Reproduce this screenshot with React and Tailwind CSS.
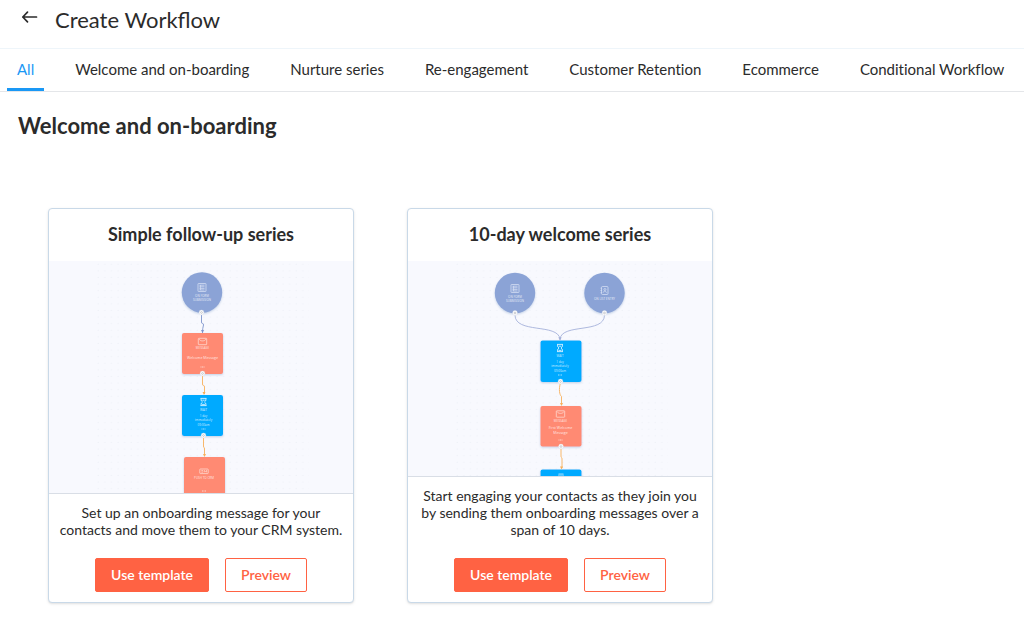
const tabs = [
  "All",
  "Welcome and on-boarding",
  "Nurture series",
  "Re-engagement",
  "Customer Retention",
  "Ecommerce",
  "Conditional Workflow",
];

const BLUE = "#00aaff";
const CORAL = "#ff8a73";
const PERIWINKLE = "#8ba3d6";
const ORANGE = "#f7b05b";

const FormIcon = ({ x, y }) => (
  <g transform={`translate(${x} ${y})`} fill="none" stroke="#d3ddf3" strokeWidth="0.8">
    <rect x="-4" y="-4" width="8" height="8" rx="0.5" />
    <path d="M-2.5 -2.3h5M-2.5 -0.7h5M-2.5 0.9h5M-2.5 2.5h5M-1.6 -2.5v5" />
  </g>
);

const ListIcon = ({ x, y }) => (
  <g transform={`translate(${x} ${y})`} fill="none" stroke="#d3ddf3" strokeWidth="0.8">
    <rect x="-3" y="-4" width="6.5" height="8" rx="1" />
    <path d="M-4 -2.3h1.6M-4 0h1.6M-4 2.3h1.6M-1.3 2.2c0-2 3.2-2 3.2 0" />
    <circle cx="0.4" cy="-1" r="1" />
  </g>
);

const MailIcon = ({ x, y }) => (
  <g transform={`translate(${x} ${y})`} fill="none" stroke="#ffe2db" strokeWidth="0.7">
    <rect x="-4.2" y="-3.2" width="8.4" height="6.4" rx="0.6" />
    <path d="M-3.4 -2.4c1.2 2.4 5.6 2.4 6.8 0" />
  </g>
);

const WaitIcon = ({ x, y }) => (
  <g transform={`translate(${x} ${y})`} fill="none" stroke="#d6f1ff" strokeWidth="0.9">
    <path d="M-3 -3.6h6M-3 3.6h6M-2.4 -3.6v1.6q0 1 1.4 2q-1.4 1 -1.4 2v1.6M2.4 -3.6v1.6q0 1 -1.4 2q1.4 1 1.4 2v1.6M-1.2 -1.8h2.4M-1.4 2.4h2.8" />
  </g>
);

const CrmIcon = ({ x, y }) => (
  <g transform={`translate(${x} ${y})`} fill="none" stroke="#ffe2db" strokeWidth="0.7">
    <rect x="-4.2" y="-2.5" width="8.4" height="4.6" rx="0.6" />
    <path d="M-2.6 -0.9h1.6M-2.6 0.6h1.6M0.2 0.8v-1.8l1.2 1 1.2 -1v1.8" />
  </g>
);

// lines is a list of [baseline, text, size]
const Labels = ({ x, lines }) => (
  <g fill="#ffffff" fillOpacity="0.8" textAnchor="middle" className="font-['Open_Sans',sans-serif]">
    {lines.map(([y, text, size = 3]) => (
      <text key={y} x={x} y={y} fontSize={size}>{text}</text>
    ))}
  </g>
);

const Dots = ({ x, y }) => (
  <path d={`M${x - 2} ${y}h4`} stroke="#ffffff" strokeOpacity="0.8" strokeWidth="0.8" strokeDasharray="1 0.5" />
);

const Port = ({ x, y }) => (
  <g>
    <circle cx={x} cy={y} r="2.4" fill="#ffffff" stroke="#dcdfe6" strokeWidth="0.4" />
    <circle cx={x} cy={y} r="0.9" fill="none" stroke="#9a9fa8" strokeWidth="0.5" />
  </g>
);

const Arrow = ({ d, x, y, color }) => (
  <g>
    <path d={d} fill="none" stroke={color} strokeWidth="0.9" />
    <path d={`M${x - 1.5} ${y - 3}h3l-1.5 3z`} fill={color} />
  </g>
);

const Canvas = ({ id, height, children }) => (
  <svg
    viewBox={`0 0 304 ${height}`}
    preserveAspectRatio="xMidYMin meet"
    className="block w-full"
    role="img"
    aria-labelledby={`${id}-title`}
  >
    <defs>
      <pattern id={`${id}-dots`} width="6.6" height="6.6" patternUnits="userSpaceOnUse">
        <circle cx="3" cy="3" r="0.5" fill="#e6e9f2" />
      </pattern>
      <filter id={`${id}-shadow`} x="-30%" y="-30%" width="160%" height="160%">
        <feDropShadow dx="0" dy="1" stdDeviation="1.3" floodColor="#7f9dc9" floodOpacity="0.45" />
      </filter>
    </defs>
    <rect x="46" width="214" height={height} fill={`url(#${id}-dots)`} />
    {children}
  </svg>
);

const FollowUpDiagram = ({ id }) => (
  <Canvas id={id} height={232}>
    <g filter={`url(#${id}-shadow)`}>
      <circle cx="153" cy="31.5" r="20.2" fill={PERIWINKLE} />
      <rect x="133" y="72" width="41" height="41" rx="2" fill={CORAL} />
      <rect x="133" y="134" width="41" height="41" rx="2" fill={BLUE} />
      <rect x="135" y="196" width="41" height="41" rx="2" fill={CORAL} />
    </g>

    <Arrow d="M152.5 53v8q0 1.5 1 1.5t1 1.5q-1 3 -1 8" x={153.5} y={72} color="#7d94cc" />
    <Arrow d="M153.5 114v9q0 1.5 1 1.5t1 1.5v7" x={155} y={134} color={ORANGE} />
    <Arrow d="M154.5 176v9q0 1.5 0.5 1.5t0.5 1.5v7" x={155.5} y={196} color={ORANGE} />

    <FormIcon x={153} y={26.5} />
    <Labels x={153} lines={[[36, "ON FORM"], [39.5, "SUBMISSION"]]} />

    <MailIcon x={153.5} y={80.5} />
    <Labels x={153.5} lines={[[88, "MESSAGE"], [97.5, "Welcome Message", 3.6]]} />
    <Dots x={153.5} y={106} />

    <WaitIcon x={154.5} y={141} />
    <Labels x={154.5} lines={[[150, "WAIT"], [155.5, "1 day"], [160, "immediately"], [165, "09:00am"]]} />
    <Dots x={154.5} y={168} />

    <CrmIcon x={155} y={210.5} />
    <Labels x={155} lines={[[217.5, "PUSH TO CRM"]]} />
    <Dots x={155} y={230} />

    <Port x={152.5} y={51.5} />
    <Port x={153.5} y={112.5} />
    <Port x={154.5} y={174.5} />
  </Canvas>
);

const WelcomeDiagram = ({ id }) => (
  <Canvas id={id} height={215}>
    <g filter={`url(#${id}-shadow)`}>
      <circle cx="107" cy="32" r="20.2" fill={PERIWINKLE} />
      <circle cx="196.5" cy="32" r="20.2" fill={PERIWINKLE} />
      <rect x="132.5" y="79.5" width="41" height="41.5" rx="2" fill={BLUE} />
      <rect x="132.5" y="145" width="41" height="40.5" rx="2" fill={CORAL} />
      <rect x="132.5" y="208.5" width="41" height="41" rx="2" fill={BLUE} />
    </g>

    <Arrow d="M107 54c0 19 43 8 45 24" x={152} y={79.5} color="#a5b1da" />
    <Arrow d="M196.5 54c0 19 -42.5 8 -44.5 24" x={152} y={79.5} color="#a5b1da" />
    <Arrow d="M152.5 122c-2 6 -1 12 1 13.5v8" x={153.5} y={145} color={ORANGE} />
    <Arrow d="M153 187v8q0 1.5 0.5 1.5t0.5 1.5v9" x={153.5} y={208.5} color={ORANGE} />

    <FormIcon x={107} y={27.5} />
    <Labels x={107} lines={[[36.5, "ON FORM"], [40.5, "SUBMISSION"]]} />
    <ListIcon x={196.5} y={29.5} />
    <Labels x={196.5} lines={[[38.5, "ON LIST ENTRY"]]} />

    <WaitIcon x={152} y={87} />
    <Labels x={152} lines={[[95.5, "WAIT"], [101.5, "1 day"], [106, "immediately"], [111, "09:00am"]]} />
    <Dots x={152} y={114} />

    <MailIcon x={152.5} y={153} />
    <Labels x={152.5} lines={[[160.5, "MESSAGE"], [168, "First Welcome", 3.6], [172.5, "Message", 3.6]]} />
    <Dots x={152.5} y={179} />

    <path d="M150.5 213h5M151 215v-1.5M153 215v-1.5M155 215v-1.5" stroke="#d6f1ff" strokeWidth="0.7" />

    <Port x={107} y={52} />
    <Port x={196.5} y={52} />
    <Port x={152.5} y={120.5} />
    <Port x={153} y={185.5} />
  </Canvas>
);

const templates = [
  {
    id: "follow-up",
    title: "Simple follow-up series",
    description: "Set up an onboarding message for your contacts and move them to your CRM system.",
    Diagram: FollowUpDiagram,
  },
  {
    id: "welcome",
    title: "10-day welcome series",
    description: "Start engaging your contacts as they join you by sending them onboarding messages over a span of 10 days.",
    Diagram: WelcomeDiagram,
  },
];

const TemplateCard = ({ id, title, description, Diagram }) => (
  <article className="flex w-[306px] flex-col overflow-hidden rounded border border-[#c9d9e8] bg-white shadow-sm">
    <h3 id={`${id}-title`} className="pt-[11px] pb-[13px] text-center text-lg leading-7 font-bold">{title}</h3>
    <div className="flex-1 border-b border-[#d9dee6] bg-[#f8f9fe]">
      <Diagram id={id} />
    </div>
    <p className="px-[10px] pt-[10px] text-center text-sm leading-[17px]">{description}</p>
    <div className="flex justify-center gap-4 pt-5 pb-[10px]">
      <button type="button" className="h-[34px] rounded-xs border border-[#ff6243] bg-[#ff6243] px-[15px] text-sm font-semibold text-white hover:bg-[#f25435]">
        Use template
      </button>
      <button type="button" className="h-[34px] rounded-xs border border-[#ff6243] px-[15px] text-sm font-semibold text-[#ff6243] hover:bg-[#fff3f0]">
        Preview
      </button>
    </div>
  </article>
);

const App = () => {
  return (
    <div className="bg-white font-['Lato',sans-serif] text-[#2b2b2b]">
      <header className="flex h-[49px] items-start gap-[17px] border-b border-[#eef5fa] pt-1 pl-[21px]">
        <button type="button" aria-label="Back" className="py-[6px]">
          <svg width="17" height="14" viewBox="0 0 17 14" fill="none" stroke="#2b2b2b" strokeWidth="1.7" strokeLinecap="round" strokeLinejoin="round">
            <path d="M15.5 7H1.8M6.5 2.2L1.8 7L6.5 11.8" />
          </svg>
        </button>
        <h1 className="text-[22px] leading-8">Create Workflow</h1>
      </header>

      <nav className="flex h-[43px] gap-[21px] overflow-hidden border-b border-[#e4e6e9] pl-[7px] [font-variant-ligatures:none]">
        {tabs.map((tab, i) => (
          <button
            key={tab}
            type="button"
            aria-current={i === 0 ? "page" : undefined}
            className={
              i === 0
                ? "shrink-0 border-b-3 border-[#1a98f5] px-[10px] pt-[2px] text-[15px] text-[#1a98f5]"
                : "shrink-0 border-b-3 border-transparent px-[10px] pt-[2px] text-[15px] hover:text-[#1a98f5]"
            }
          >
            {tab}
          </button>
        ))}
      </nav>

      <main className="px-[18px] pt-[18px] pb-4">
        <h2 className="text-[22px] leading-8 font-bold">Welcome and on-boarding</h2>
        <div className="flex flex-wrap gap-[53px] px-[30px] pt-[66px]">
          {templates.map((template) => (
            <TemplateCard key={template.id} {...template} />
          ))}
        </div>
      </main>
    </div>
  );
};

export default App;
